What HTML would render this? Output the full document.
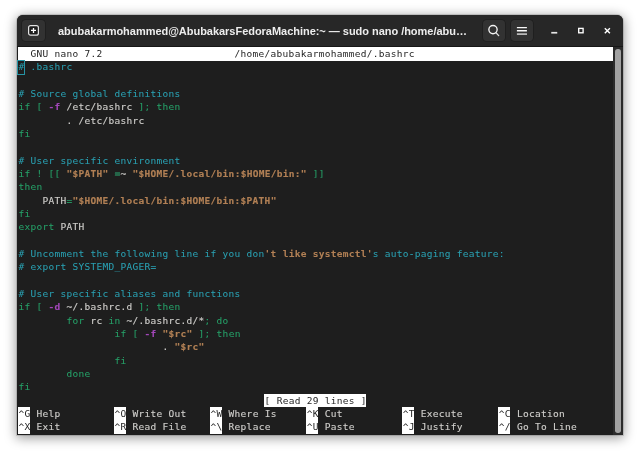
<!DOCTYPE html>
<html lang="en">
<head>
<meta charset="utf-8">
<title>abubakarmohammed@AbubakarsFedoraMachine:~ — sudo nano /home/abubakarmohammed/.bashrc</title>
<style>
html,body{margin:0;padding:0;}
body{width:640px;height:454px;background:#fff;position:relative;overflow:hidden;}
#win{position:absolute;left:17px;top:15px;width:606px;height:419.5px;background:#1e1e1e;
  border-radius:6px 6px 0 0;
  box-shadow:0 0 0 1px rgba(0,0,0,.12),0 2px 12px 1px rgba(0,0,0,.40);}
#hdr{position:absolute;left:0;top:0;width:606px;height:31.9px;background:#272727;border-radius:6px 6px 0 0;
  border-bottom:1px solid #161616;box-sizing:border-box;}
.btn{position:absolute;top:4.75px;height:21.5px;width:23px;background:#323232;border-radius:3.5px;box-shadow:0 0 0 .6px rgba(0,0,0,.3)}
#title{will-change:transform;position:absolute;left:40.5px;top:7px;height:18px;line-height:18px;white-space:pre;
  font-family:"Liberation Sans","DejaVu Sans",sans-serif;font-weight:bold;font-size:11px;color:#ededed;letter-spacing:-0.03px}
#bg,#term{position:absolute;left:1px;top:32.0px;width:595px;height:387px;}
#term{will-change:transform;transform:translateX(0.4px);
  font-family:"DejaVu Sans Mono","Liberation Mono",monospace;font-size:9.5px;letter-spacing:0.2855px;color:#d0cfcc;-webkit-text-stroke:0.12px;}
.r{position:absolute;left:0;height:13.3333px;line-height:14.4033px;white-space:pre;width:595px;}
.b{position:absolute;height:13.3333px;background:#fff}
.c{color:#2aa1b3;-webkit-text-stroke:.04px}.g{color:#26a269;-webkit-text-stroke:.04px}.m{color:#a347ba;font-weight:bold}.y{color:#b28055;font-weight:bold}
.eq{color:#256549}
.k{color:#1e1e1e;-webkit-text-stroke:0}
#cur{position:absolute;left:-.8px;top:13.10px;width:7.8px;height:14.6px;box-sizing:border-box;border:1px solid #2694a5;}
#tr{position:absolute;left:596.3px;top:32px;width:9.7px;height:387.5px;background:#2b2b2b}
#sb{position:absolute;left:598.2px;top:33.7px;width:5.5px;height:384px;background:#a2a2a2;border-radius:2.75px;}
svg{position:absolute;overflow:visible}
</style>
</head>
<body>
<div id="win">
 <div id="hdr">
  <div class="btn" style="left:5px;width:22.9px"></div>
  <div class="btn" style="left:465.9px;width:22.3px"></div>
  <div class="btn" style="left:493.8px;width:22px"></div>
  <div id="title">abubakarmohammed@AbubakarsFedoraMachine:~ — sudo nano /home/abu…</div>
  <svg style="left:11px;top:10.1px" width="11" height="11" viewBox="0 0 11 11"><rect x=".6" y=".6" width="9.8" height="9.6" rx="2" fill="#1d1d1d" stroke="#e4e4e4" stroke-width="1.2"/><path d="M5.5 2.9v5M3 5.4h5" stroke="#fff" stroke-width="1.3" fill="none"/></svg>
  <svg style="left:0;top:0" width="606" height="32" viewBox="0 0 606 32">
   <circle cx="476" cy="14.6" r="4.15" fill="none" stroke="#f4f4f4" stroke-width="1.35"/>
   <path d="M479 17.7L481.7 20.6" stroke="#e0e0e0" stroke-width="1.3" stroke-linecap="round"/>
   <path d="M499.9 12.6h10M499.9 15.8h10" stroke="#fafafa" stroke-width="1.45"/>
   <path d="M499.9 19.1h10" stroke="#c8c8c8" stroke-width="1.6"/>
   <path d="M534.25 17.75h6" stroke="#e6e6e6" stroke-width="1.7"/>
   <rect x="561.7" y="13.4" width="4.4" height="4.4" fill="none" stroke="#fff" stroke-width="1.35"/>
   <path d="M587.8 13.2L592.9 18.3M592.9 13.2L587.8 18.3" stroke="#fff" stroke-width="1.4"/>
  </svg>
 </div>
 <div id="bg">
<div class="b" style="left:0.00px;top:0.00px;width:594.50px;width:595px;top:-.1px;height:14px"></div>
<div class="b" style="left:96.88px;top:125.10px;width:4.8px;height:3.9px;background:#256549"></div>
<div class="b" style="left:246.20px;top:346.67px;width:102.08px;"></div>
<div class="b" style="left:0.00px;top:360.00px;width:12.01px;"></div>
<div class="b" style="left:96.08px;top:360.00px;width:12.01px;"></div>
<div class="b" style="left:192.16px;top:360.00px;width:12.01px;"></div>
<div class="b" style="left:288.24px;top:360.00px;width:12.01px;"></div>
<div class="b" style="left:384.32px;top:360.00px;width:12.01px;"></div>
<div class="b" style="left:480.40px;top:360.00px;width:12.01px;"></div>
<div class="b" style="left:0.00px;top:373.33px;width:12.01px;"></div>
<div class="b" style="left:96.08px;top:373.33px;width:12.01px;"></div>
<div class="b" style="left:192.16px;top:373.33px;width:12.01px;"></div>
<div class="b" style="left:288.24px;top:373.33px;width:12.01px;"></div>
<div class="b" style="left:384.32px;top:373.33px;width:12.01px;"></div>
<div class="b" style="left:480.40px;top:373.33px;width:12.01px;"></div>
<div id="cur"></div>
 </div>
 <div id="term">
<div class="r k" style="top:0.00px">  GNU nano 7.2                      /home/abubakarmohammed/.bashrc</div>
<div class="r c" style="top:13.33px"># .bashrc</div>
<div class="r c" style="top:40.00px"># Source global definitions</div>
<div class="r" style="top:53.33px"><span class="g">if [ </span><span class="m">-f</span> /etc/bashrc <span class="g">]; then</span></div>
<div class="r" style="top:66.67px">        . /etc/bashrc</div>
<div class="r g" style="top:80.00px">fi</div>
<div class="r c" style="top:106.67px"># User specific environment</div>
<div class="r" style="top:120.00px"><span class="g">if ! [[ </span><span class="y">"$PATH"</span> <span class="eq">=</span>~ <span class="y">"$HOME/.local/bin:$HOME/bin:"</span> <span class="g">]]</span></div>
<div class="r g" style="top:133.33px">then</div>
<div class="r" style="top:146.67px">    PATH<span class="g">=</span><span class="y">"$HOME/.local/bin:$HOME/bin:$PATH"</span></div>
<div class="r g" style="top:160.00px">fi</div>
<div class="r" style="top:173.33px"><span class="g">export</span> PATH</div>
<div class="r c" style="top:200.00px"># Uncomment the following line if you don<span class="y">'t like systemctl'</span>s auto-paging feature:</div>
<div class="r c" style="top:213.33px"># export SYSTEMD_PAGER=</div>
<div class="r c" style="top:240.00px"># User specific aliases and functions</div>
<div class="r" style="top:253.33px"><span class="g">if [ </span><span class="m">-d</span> ~/.bashrc.d <span class="g">]; then</span></div>
<div class="r" style="top:266.67px">        <span class="g">for</span> rc <span class="g">in</span> ~/.bashrc.d/*<span class="g">; do</span></div>
<div class="r" style="top:280.00px">                <span class="g">if [ </span><span class="m">-f</span> <span class="y">"$rc"</span> <span class="g">]; then</span></div>
<div class="r" style="top:293.33px">                        . <span class="y">"$rc"</span></div>
<div class="r g" style="top:306.67px">                fi</div>
<div class="r g" style="top:320.00px">        done</div>
<div class="r g" style="top:333.33px">fi</div>
<div class="r" style="top:346.67px">                                         <span class="k">[ Read 29 lines ]</span></div>
<div class="r" style="top:360.00px"><span class="k">^G</span> Help         <span class="k">^O</span> Write Out    <span class="k">^W</span> Where Is     <span class="k">^K</span> Cut          <span class="k">^T</span> Execute      <span class="k">^C</span> Location</div>
<div class="r" style="top:373.33px"><span class="k">^X</span> Exit         <span class="k">^R</span> Read File    <span class="k">^\</span> Replace      <span class="k">^U</span> Paste        <span class="k">^J</span> Justify      <span class="k">^/</span> Go To Line</div>
 </div>
 <div id="tr"></div>
 <div id="sb"></div>
</div>
</body>
</html>
